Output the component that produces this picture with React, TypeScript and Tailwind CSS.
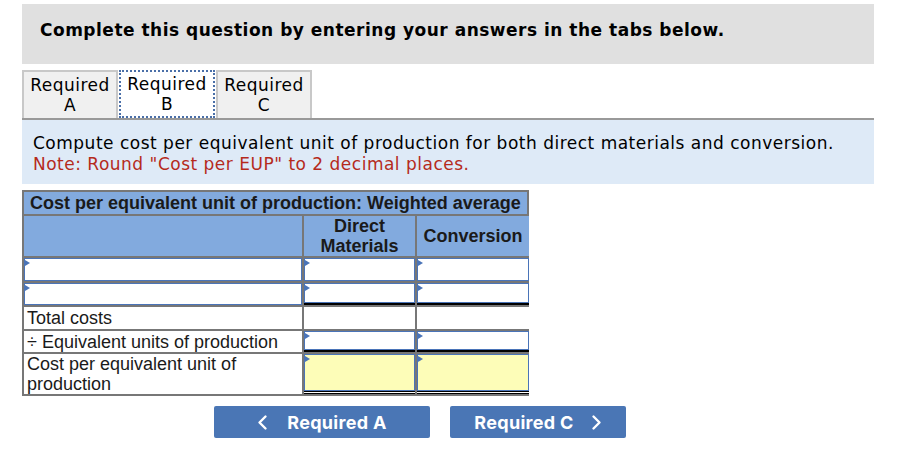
import React from "react";

const verdana = { fontFamily: '"DejaVu Sans", Verdana, sans-serif', letterSpacing: "0.5px" };

function Tri() {
  return (
    <span className="absolute left-0 top-[1px] w-0 h-0 border-t-[3px] border-b-[3px] border-l-[5px] border-t-transparent border-b-transparent border-l-[#4a74b8]" />
  );
}

function InputCell({ yellow = false, bottom = "" }: { yellow?: boolean; bottom?: string }) {
  return (
    <div className={`h-full bg-white ${bottom}`}>
      <div className={`relative h-full border border-[#4a74b8] ${yellow ? "bg-[#fdfdb8]" : "bg-white"}`}>
        <Tri />
      </div>
    </div>
  );
}

function Chevron({ dir }: { dir: "left" | "right" }) {
  return (
    <svg width="11" height="17" viewBox="0 0 11 17" fill="none">
      {dir === "left" ? (
        <path d="M8.5 2.5 L2.5 8.5 L8.5 14.5" stroke="white" strokeWidth="2.4" strokeLinecap="round" strokeLinejoin="round" />
      ) : (
        <path d="M2.5 2.5 L8.5 8.5 L2.5 14.5" stroke="white" strokeWidth="2.4" strokeLinecap="round" strokeLinejoin="round" />
      )}
    </svg>
  );
}

export default function App() {
  const arial = { fontFamily: '"Liberation Sans", Arial, sans-serif' };
  return (
    <div className="w-[924px] h-[464px] bg-white pt-[4px] overflow-hidden">
      <div className="ml-[22px] w-[852px] h-[60px] bg-[#e0e0e0] pl-[18px] pt-[14px]">
        <span className="text-[17px] leading-[20px] font-bold text-black" style={verdana}>
          Complete this question by entering your answers in the tabs below.
        </span>
      </div>

      <div className="ml-[22px] w-[852px] mt-[6px] flex items-end border-b-2 border-[#999]">
        {["A", "B", "C"].map((l, i) => (
          <div
            key={l}
            className={`w-[96px] h-[48px] mr-[1px] flex flex-col items-center justify-center text-[17px] leading-[20px] text-black ${
              i === 1
                ? "bg-white border-2 border-dotted border-[#4a6fa8]"
                : "bg-[#f0f0f0] border-2 border-b-0 border-[#c8c8c8]"
            }`}
            style={verdana}
          >
            <span>Required</span>
            <span>{l}</span>
          </div>
        ))}
      </div>

      <div className="ml-[22px] w-[852px] h-[64px] bg-[#deeaf7] pl-[11px] pt-[13px] text-[17px] leading-[21px]" style={verdana}>
        <div className="text-black">
          Compute cost per equivalent unit of production for both direct materials and conversion.
        </div>
        <div className="text-[#b52a1c]">Note: Round "Cost per EUP" to 2 decimal places.</div>
      </div>

      <div className="ml-[22px] mt-[6px] w-[507px] border-2 border-[#777] bg-[#777]" style={arial}>
        <div className="h-[22px] bg-[#82aade] pl-[6px] flex items-center text-[18px] font-bold text-[#1a1a1a] mb-[2px]">
          Cost per equivalent unit of production: Weighted average
        </div>
        <div className="grid grid-cols-[278px_111px_112px] gap-[2px]">
          <div className="h-[40px] bg-[#82aade]" />
          <div className="h-[40px] bg-[#82aade] flex items-center justify-center text-center text-[18px] leading-[20px] font-bold text-[#1a1a1a]">
            Direct
            <br />
            Materials
          </div>
          <div className="h-[40px] bg-[#82aade] flex items-center justify-center text-[18px] font-bold text-[#1a1a1a]">
            Conversion
          </div>

          <div className="h-[23px]"><InputCell /></div>
          <div className="h-[23px]"><InputCell /></div>
          <div className="h-[23px]"><InputCell /></div>

          <div className="h-[22px]"><InputCell /></div>
          <div className="h-[22px]"><InputCell bottom="border-b-2 border-black" /></div>
          <div className="h-[22px]"><InputCell bottom="border-b-2 border-black" /></div>

          <div className="h-[22px] bg-white pl-[3px] flex items-center text-[18px] leading-[20px] text-[#1a1a1a]">Total costs</div>
          <div className="h-[22px] bg-white" />
          <div className="h-[22px] bg-white" />

          <div className="h-[21px] bg-white pl-[3px] flex items-center text-[18px] leading-[20px] text-[#1a1a1a]">÷ Equivalent units of production</div>
          <div className="h-[21px]"><InputCell bottom="border-b-2 border-black" /></div>
          <div className="h-[21px]"><InputCell bottom="border-b-2 border-black" /></div>

          <div className="h-[40px] bg-white pl-[3px] flex items-center text-[18px] leading-[20px] text-[#1a1a1a]">
            Cost per equivalent unit of
            <br />
            production
          </div>
          <div className="h-[40px]"><InputCell yellow bottom="border-b-[3px] border-double border-black" /></div>
          <div className="h-[40px]"><InputCell yellow bottom="border-b-[3px] border-double border-black" /></div>
        </div>
      </div>

      <div className="ml-[214px] mt-[10px] flex gap-[20px]" style={{ fontFamily: 'Inter, "Open Sans", sans-serif' }}>
        <button className="w-[216px] h-[32px] rounded-[2px] bg-[#4a76b5] flex items-center justify-center gap-[19px] text-white text-[18px] font-bold tracking-[0.3px]">
          <Chevron dir="left" />
          <span>Required A</span>
        </button>
        <button className="w-[176px] h-[32px] rounded-[2px] bg-[#4a76b5] flex items-center justify-center gap-[17px] text-white text-[18px] font-bold tracking-[0.3px]">
          <span>Required C</span>
          <Chevron dir="right" />
        </button>
      </div>
    </div>
  );
}
